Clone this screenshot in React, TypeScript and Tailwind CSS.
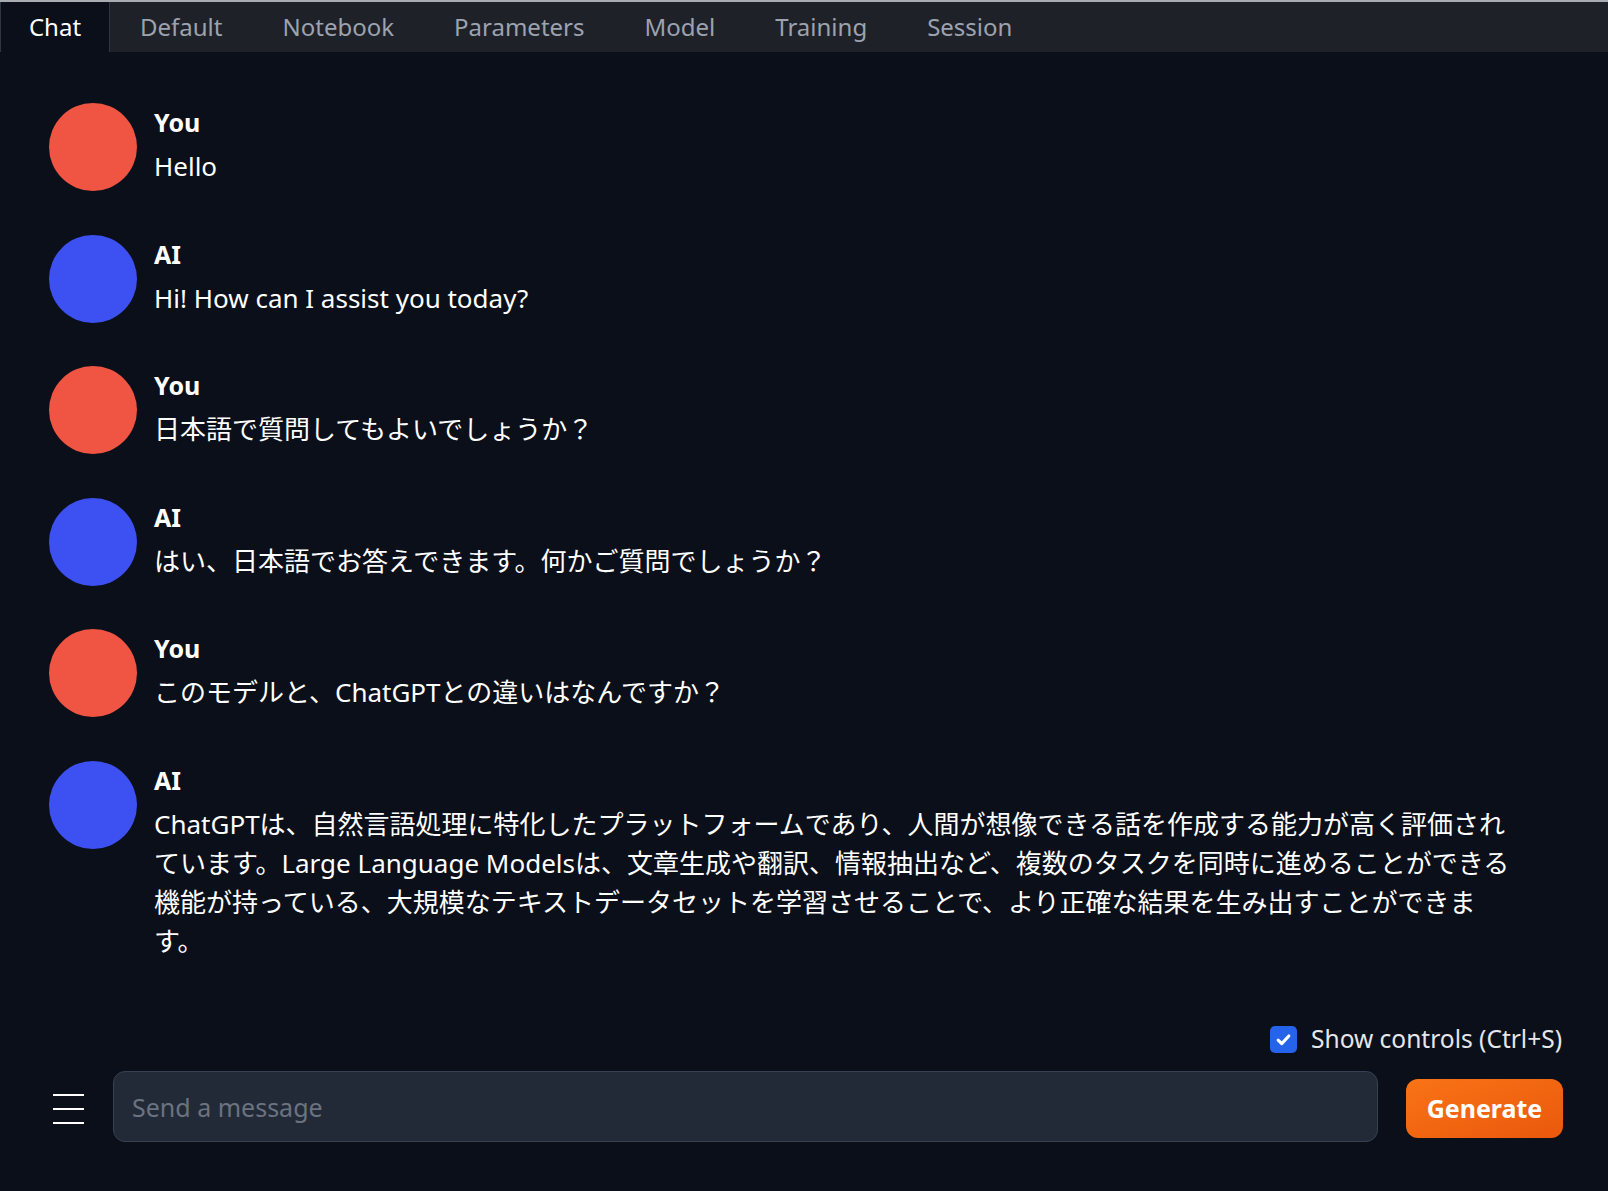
import { useState } from "react";

type Message = {
  role: "user" | "ai";
  text: string;
};

const tabs = ["Chat", "Default", "Notebook", "Parameters", "Model", "Training", "Session"];

const messages: Message[] = [
  { role: "user", text: "Hello" },
  { role: "ai", text: "Hi! How can I assist you today?" },
  { role: "user", text: "日本語で質問してもよいでしょうか？" },
  { role: "ai", text: "はい、日本語でお答えできます。何かご質問でしょうか？" },
  { role: "user", text: "このモデルと、ChatGPTとの違いはなんですか？" },
  {
    role: "ai",
    text: "ChatGPTは、自然言語処理に特化したプラットフォームであり、人間が想像できる話を作成する能力が高く評価されています。Large Language Modelsは、文章生成や翻訳、情報抽出など、複数のタスクを同時に進めることができる機能が持っている、大規模なテキストデータセットを学習させることで、より正確な結果を生み出すことができます。",
  },
];

const font = { fontFamily: '"Noto Sans", "Noto Sans CJK JP", sans-serif' };

function TabBar() {
  return (
    <div className="border-t-2 border-[#a9acb1] bg-[#1f2129]">
      <div className="flex h-[50px] items-stretch">
        {tabs.map((t, i) =>
          i === 0 ? (
            <div
              key={t}
              className="flex w-[110px] items-center justify-center border-x border-[#2f3542] bg-[#0b0f19] text-[24px] text-white"
            >
              {t}
            </div>
          ) : (
            <div key={t} className="flex items-center px-[30px] text-[24px] text-[#9ca3af]">
              {t}
            </div>
          )
        )}
      </div>
    </div>
  );
}

function ChatRow({ m }: { m: Message }) {
  const isUser = m.role === "user";
  return (
    <div className="flex gap-[17px]">
      <div
        className={`h-[88px] w-[88px] shrink-0 rounded-full ${
          isUser ? "bg-[#f05442]" : "bg-[#3d51f2]"
        }`}
      />
      <div className="w-[1364px]">
        <div className="text-[25px] font-bold leading-[39px] text-white">
          {isUser ? "You" : "AI"}
        </div>
        <div className="mt-[5px] text-[26px] leading-[39px] text-white">{m.text}</div>
      </div>
    </div>
  );
}

export default function App() {
  const [showControls, setShowControls] = useState(true);

  return (
    <div className="flex h-[1191px] w-[1608px] flex-col bg-[#0b0f19]" style={font}>
      <TabBar />
      <div className="flex flex-1 flex-col gap-[43.5px] pl-[49px] pt-[51px]">
        {messages.map((m, i) => (
          <ChatRow key={i} m={m} />
        ))}
      </div>

      <div className="flex justify-end pr-[46px]">
        <label className="flex cursor-pointer items-center gap-[14px]">
          <button
            onClick={() => setShowControls(!showControls)}
            className={`flex h-[27px] w-[27px] items-center justify-center rounded-[5px] ${
              showControls ? "bg-[#2563eb]" : "border border-gray-500 bg-transparent"
            }`}
          >
            {showControls && (
              <svg width="19" height="19" viewBox="0 0 16 16" fill="none">
                <path
                  d="M3.5 8.5l3 3 6-6.5"
                  stroke="white"
                  strokeWidth="2.6"
                  strokeLinecap="round"
                  strokeLinejoin="round"
                />
              </svg>
            )}
          </button>
          <span className="text-[24.5px] text-[#e5e7eb]">Show controls (Ctrl+S)</span>
        </label>
      </div>

      <div className="flex items-center pb-[49px] pt-[13px]">
        <button className="mt-[4px] flex w-[113px] flex-col items-start gap-[12px] pl-[53px]">
          <span className="block h-[2px] w-[31px] bg-white" />
          <span className="block h-[2px] w-[31px] bg-white" />
          <span className="block h-[2px] w-[31px] bg-white" />
        </button>
        <input
          placeholder="Send a message"
          className="h-[71px] w-[1265px] rounded-[12px] border border-[#374151] bg-[#222a38] px-[18px] text-[25px] text-white placeholder-[#6b7280] outline-none"
        />
        <button className="ml-[28px] mt-[4px] h-[59px] w-[157px] rounded-[12px] bg-gradient-to-br from-[#f97316] to-[#ea580c] text-[25px] font-bold text-white">
          Generate
        </button>
      </div>
    </div>
  );
}
